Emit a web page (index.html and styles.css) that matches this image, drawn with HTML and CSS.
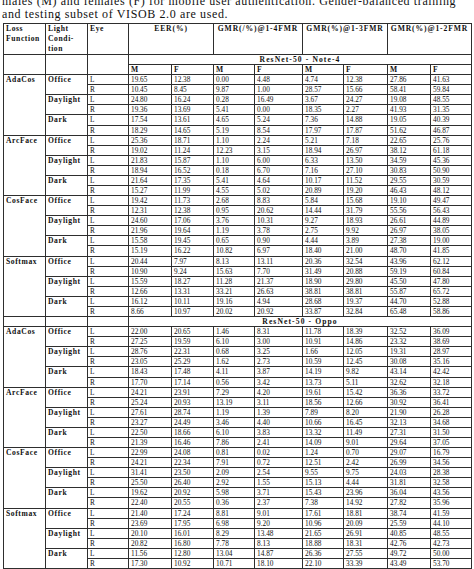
FILE: index.html
```html
<!DOCTYPE html>
<html>
<head>
<meta charset="utf-8">
<link rel="stylesheet" href="styles.css">
</head>
<body>
<div class="cap">
<p class="capline">males (M) and females (F) for mobile user authentication. Gender-balanced training</p>
<p class="capline">and testing subset of VISOB 2.0 are used.</p>
</div>
<table class="res">
<colgroup>
<col class="w42"><col class="w42"><col class="w41"><col class="w43"><col class="w42"><col class="w41"><col class="w48"><col class="w41"><col class="w44"><col class="w43"><col class="w41">
</colgroup>
<thead>
<tr class="hrow">
<th>Loss<br>Function</th><th>Light<br>Condi-<br>tion</th><th>Eye</th>
<th colspan="2" class="c">EER(%)</th><th colspan="2" class="c">GMR(/%)@1-4FMR</th><th colspan="2" class="c">GMR(%)@1-3FMR</th><th colspan="2" class="c">GMR(%)@1-2FMR</th>
</tr>
<tr class="srow"><th rowspan="2"></th><th rowspan="2"></th><th rowspan="2"></th><th colspan="8" class="c net">ResNet-50 - Note-4</th></tr>
<tr class="mrow"><th>M</th><th>F</th><th>M</th><th>F</th><th>M</th><th>F</th><th>M</th><th>F</th></tr>
</thead>
<tbody>
<tr><td rowspan="6" class="lbl">AdaCos</td><td rowspan="2" class="lbl">Office</td><td>L</td><td>19.65</td><td>12.38</td><td>0.00</td><td>4.48</td><td>4.74</td><td>12.38</td><td>27.86</td><td>41.63</td></tr>
<tr><td>R</td><td>10.45</td><td>8.45</td><td>9.87</td><td>1.00</td><td>28.57</td><td>15.66</td><td>58.41</td><td>59.84</td></tr>
<tr><td rowspan="2" class="lbl">Daylight</td><td>L</td><td>24.80</td><td>16.24</td><td>0.28</td><td>16.49</td><td>3.67</td><td>24.27</td><td>19.08</td><td>48.55</td></tr>
<tr><td>R</td><td>19.36</td><td>13.69</td><td>5.41</td><td>0.00</td><td>18.35</td><td>2.27</td><td>41.93</td><td>31.35</td></tr>
<tr><td rowspan="2" class="lbl">Dark</td><td>L</td><td>17.54</td><td>13.61</td><td>4.65</td><td>5.24</td><td>7.36</td><td>14.88</td><td>19.05</td><td>40.39</td></tr>
<tr><td>R</td><td>18.29</td><td>14.65</td><td>5.19</td><td>8.54</td><td>17.97</td><td>17.87</td><td>51.62</td><td>46.87</td></tr>

<tr><td rowspan="6" class="lbl">ArcFace</td><td rowspan="2" class="lbl">Office</td><td>L</td><td>25.36</td><td>18.71</td><td>1.10</td><td>2.24</td><td>5.21</td><td>7.18</td><td>22.65</td><td>25.76</td></tr>
<tr><td>R</td><td>19.02</td><td>11.24</td><td>12.23</td><td>3.15</td><td>18.94</td><td>26.97</td><td>38.12</td><td>61.18</td></tr>
<tr><td rowspan="2" class="lbl">Daylight</td><td>L</td><td>21.83</td><td>15.87</td><td>1.10</td><td>6.00</td><td>6.33</td><td>13.50</td><td>34.59</td><td>45.36</td></tr>
<tr><td>R</td><td>18.94</td><td>16.52</td><td>0.18</td><td>6.70</td><td>7.16</td><td>27.10</td><td>30.83</td><td>50.90</td></tr>
<tr><td rowspan="2" class="lbl">Dark</td><td>L</td><td>21.64</td><td>17.35</td><td>5.41</td><td>4.64</td><td>10.17</td><td>11.52</td><td>29.55</td><td>30.59</td></tr>
<tr><td>R</td><td>15.27</td><td>11.99</td><td>4.55</td><td>5.02</td><td>20.89</td><td>19.20</td><td>46.43</td><td>48.12</td></tr>

<tr><td rowspan="6" class="lbl">CosFace</td><td rowspan="2" class="lbl">Office</td><td>L</td><td>19.42</td><td>11.73</td><td>2.68</td><td>8.83</td><td>5.84</td><td>15.68</td><td>19.10</td><td>49.47</td></tr>
<tr><td>R</td><td>12.31</td><td>12.38</td><td>0.95</td><td>20.62</td><td>14.44</td><td>31.79</td><td>55.56</td><td>56.43</td></tr>
<tr><td rowspan="2" class="lbl">Daylight</td><td>L</td><td>24.60</td><td>17.06</td><td>3.76</td><td>10.31</td><td>9.27</td><td>18.93</td><td>26.61</td><td>44.89</td></tr>
<tr><td>R</td><td>21.96</td><td>19.64</td><td>1.19</td><td>3.78</td><td>2.75</td><td>9.92</td><td>26.97</td><td>38.05</td></tr>
<tr><td rowspan="2" class="lbl">Dark</td><td>L</td><td>15.58</td><td>19.45</td><td>0.65</td><td>0.90</td><td>4.44</td><td>3.89</td><td>27.38</td><td>19.00</td></tr>
<tr><td>R</td><td>15.19</td><td>16.22</td><td>10.82</td><td>6.97</td><td>18.40</td><td>21.00</td><td>48.70</td><td>41.85</td></tr>

<tr><td rowspan="6" class="lbl">Softmax</td><td rowspan="2" class="lbl">Office</td><td>L</td><td>20.44</td><td>7.97</td><td>8.13</td><td>13.11</td><td>20.36</td><td>32.54</td><td>43.96</td><td>62.12</td></tr>
<tr><td>R</td><td>10.90</td><td>9.24</td><td>15.63</td><td>7.70</td><td>31.49</td><td>20.88</td><td>59.19</td><td>60.84</td></tr>
<tr><td rowspan="2" class="lbl">Daylight</td><td>L</td><td>15.59</td><td>18.27</td><td>11.28</td><td>21.37</td><td>18.90</td><td>29.80</td><td>45.50</td><td>47.80</td></tr>
<tr><td>R</td><td>12.66</td><td>13.31</td><td>33.21</td><td>26.63</td><td>38.81</td><td>38.81</td><td>55.87</td><td>65.72</td></tr>
<tr><td rowspan="2" class="lbl">Dark</td><td>L</td><td>16.12</td><td>10.11</td><td>19.16</td><td>4.94</td><td>28.68</td><td>19.37</td><td>44.70</td><td>52.88</td></tr>
<tr><td>R</td><td>8.66</td><td>10.97</td><td>20.02</td><td>20.92</td><td>33.87</td><td>32.84</td><td>65.48</td><td>58.86</td></tr>

<tr class="sep"><td></td><td></td><td></td><td colspan="8" class="c net">ResNet-50 - Oppo</td></tr>

<tr><td rowspan="6" class="lbl">AdaCos</td><td rowspan="2" class="lbl">Office</td><td>L</td><td>22.00</td><td>20.65</td><td>1.46</td><td>8.31</td><td>11.78</td><td>18.39</td><td>32.52</td><td>36.09</td></tr>
<tr><td>R</td><td>27.25</td><td>19.59</td><td>6.10</td><td>3.00</td><td>10.91</td><td>14.86</td><td>23.32</td><td>38.69</td></tr>
<tr><td rowspan="2" class="lbl">Daylight</td><td>L</td><td>28.76</td><td>22.31</td><td>0.68</td><td>3.25</td><td>1.66</td><td>12.05</td><td>19.31</td><td>28.97</td></tr>
<tr><td>R</td><td>23.05</td><td>25.29</td><td>1.62</td><td>2.73</td><td>10.59</td><td>12.45</td><td>30.08</td><td>35.16</td></tr>
<tr><td rowspan="2" class="lbl">Dark</td><td>L</td><td>18.43</td><td>17.48</td><td>4.11</td><td>3.87</td><td>14.19</td><td>9.82</td><td>43.14</td><td>42.42</td></tr>
<tr><td>R</td><td>17.70</td><td>17.14</td><td>0.56</td><td>3.42</td><td>13.73</td><td>5.11</td><td>32.62</td><td>32.18</td></tr>

<tr><td rowspan="6" class="lbl">ArcFace</td><td rowspan="2" class="lbl">Office</td><td>L</td><td>24.21</td><td>23.91</td><td>7.29</td><td>4.20</td><td>19.61</td><td>15.42</td><td>36.36</td><td>33.72</td></tr>
<tr><td>R</td><td>25.24</td><td>20.93</td><td>13.19</td><td>3.11</td><td>18.56</td><td>12.66</td><td>30.92</td><td>36.41</td></tr>
<tr><td rowspan="2" class="lbl">Daylight</td><td>L</td><td>27.61</td><td>28.74</td><td>1.19</td><td>1.39</td><td>7.89</td><td>8.20</td><td>21.90</td><td>26.28</td></tr>
<tr><td>R</td><td>23.27</td><td>24.49</td><td>3.46</td><td>4.40</td><td>10.66</td><td>16.45</td><td>32.13</td><td>34.68</td></tr>
<tr><td rowspan="2" class="lbl">Dark</td><td>L</td><td>22.50</td><td>18.66</td><td>6.10</td><td>3.83</td><td>13.32</td><td>11.49</td><td>27.31</td><td>31.50</td></tr>
<tr><td>R</td><td>21.39</td><td>16.46</td><td>7.86</td><td>2.41</td><td>14.09</td><td>9.01</td><td>29.64</td><td>37.05</td></tr>

<tr><td rowspan="6" class="lbl">CosFace</td><td rowspan="2" class="lbl">Office</td><td>L</td><td>22.99</td><td>24.08</td><td>0.81</td><td>0.02</td><td>1.24</td><td>0.70</td><td>29.07</td><td>16.79</td></tr>
<tr><td>R</td><td>24.21</td><td>22.34</td><td>7.91</td><td>0.72</td><td>12.51</td><td>2.42</td><td>26.99</td><td>34.56</td></tr>
<tr><td rowspan="2" class="lbl">Daylight</td><td>L</td><td>31.41</td><td>23.50</td><td>2.09</td><td>2.54</td><td>9.55</td><td>9.75</td><td>24.03</td><td>28.38</td></tr>
<tr><td>R</td><td>25.50</td><td>26.40</td><td>2.92</td><td>1.55</td><td>15.13</td><td>4.44</td><td>31.81</td><td>32.58</td></tr>
<tr><td rowspan="2" class="lbl">Dark</td><td>L</td><td>19.62</td><td>20.92</td><td>5.98</td><td>3.71</td><td>15.43</td><td>23.96</td><td>36.04</td><td>43.56</td></tr>
<tr><td>R</td><td>22.40</td><td>20.55</td><td>0.36</td><td>2.37</td><td>7.38</td><td>14.92</td><td>27.82</td><td>35.96</td></tr>

<tr><td rowspan="6" class="lbl">Softmax</td><td rowspan="2" class="lbl">Office</td><td>L</td><td>21.40</td><td>17.24</td><td>8.81</td><td>9.01</td><td>17.61</td><td>18.81</td><td>38.74</td><td>41.59</td></tr>
<tr><td>R</td><td>23.69</td><td>17.95</td><td>6.98</td><td>9.20</td><td>10.96</td><td>20.09</td><td>25.59</td><td>44.10</td></tr>
<tr><td rowspan="2" class="lbl">Daylight</td><td>L</td><td>20.10</td><td>16.01</td><td>8.29</td><td>13.48</td><td>21.65</td><td>26.91</td><td>40.85</td><td>48.55</td></tr>
<tr><td>R</td><td>20.82</td><td>16.80</td><td>7.78</td><td>8.13</td><td>18.88</td><td>18.31</td><td>42.76</td><td>42.73</td></tr>
<tr><td rowspan="2" class="lbl">Dark</td><td>L</td><td>11.56</td><td>12.80</td><td>13.04</td><td>14.87</td><td>26.36</td><td>27.55</td><td>49.72</td><td>50.00</td></tr>
<tr><td>R</td><td>17.30</td><td>10.92</td><td>10.71</td><td>18.10</td><td>22.10</td><td>33.39</td><td>43.49</td><td>53.70</td></tr>
</tbody>
</table>
</body>
</html>
```
FILE: styles.css
```css
html, body {
  margin: 0;
  padding: 0;
  background: #ffffff;
}
body {
  width: 474px;
  height: 569px;
  overflow: hidden;
  font-family: "Liberation Serif", "Times New Roman", serif;
  color: #111111;
}
.cap {
  margin-top: -5px;
  padding-left: 2px;
}
.capline {
  margin: 0;
  font-size: 12px;
  line-height: 13px;
  letter-spacing: 0.62px;
  white-space: nowrap;
  overflow: hidden;
}
.res {
  margin: 2px 0 0 3px;
  width: 468px;
  table-layout: fixed;
  border-collapse: collapse;
  font-size: 7.3px;
}
.w41 { width: 41px; }
.w42 { width: 42px; }
.w43 { width: 43px; }
.w44 { width: 44px; }
.w48 { width: 48px; }
.res th,
.res td {
  border: 1px solid #2e2e2e;
  padding: 0 0 0 2px;
  line-height: 9.08px;
  white-space: nowrap;
  overflow: hidden;
  text-align: left;
  vertical-align: top;
}
.res th {
  font-weight: bold;
  font-size: 7.6px;
  letter-spacing: 0.6px;
}
.res .hrow th {
  line-height: 10px;
}
.res .c {
  text-align: center;
  padding-left: 0;
}
.res .hrow th.c {
  letter-spacing: 0.9px;
}
.res .net {
  letter-spacing: 1.1px;
}
.res .lbl {
  font-weight: bold;
  font-size: 7.6px;
  letter-spacing: 0.6px;
}
.res .sep td {
  font-weight: bold;
  font-size: 7.6px;
}
```
